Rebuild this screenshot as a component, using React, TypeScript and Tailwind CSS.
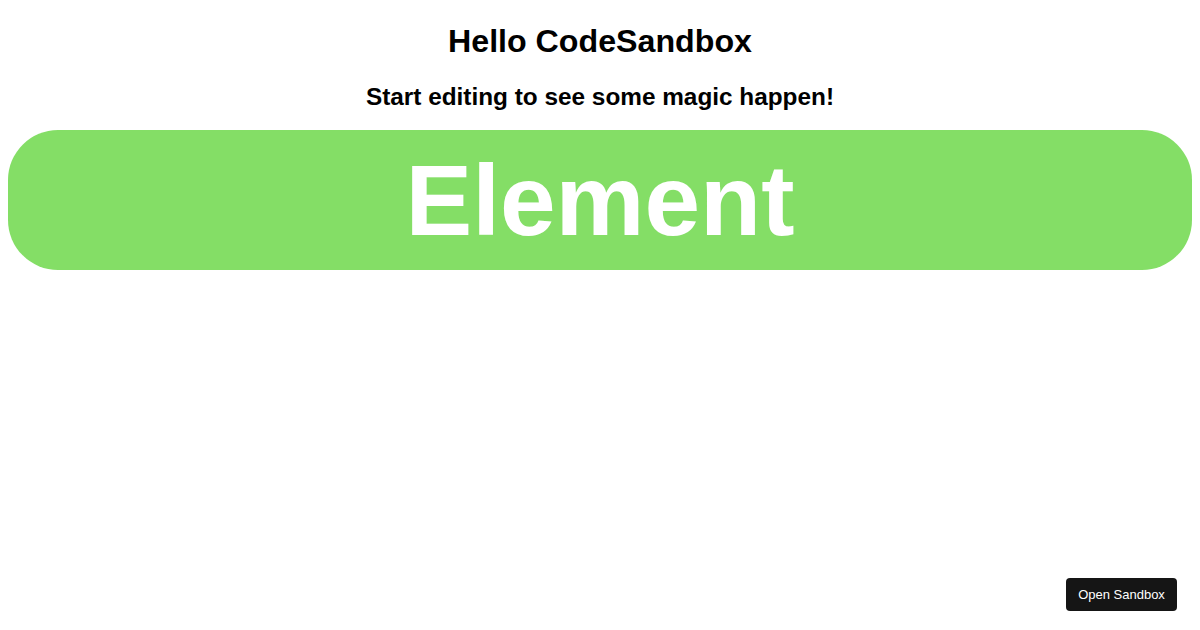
export default function App() {
  return (
    <div className="min-h-screen bg-white p-2 text-black font-['Liberation_Sans',Arial,sans-serif]">
      <div className="text-center">
        <h1 className="mt-[15px] text-[32.2px] font-bold leading-[37px]">Hello CodeSandbox</h1>
        <h2 className="mt-[23px] mb-[19.5px] text-[24.35px] font-bold leading-[27.6px]">
          Start editing to see some magic happen!
        </h2>
      </div>

      <div className="flex h-[140px] items-center justify-center rounded-[50px] bg-[#84de66]">
        <span className="text-[100px] font-bold leading-[115px] text-white">Element</span>
      </div>

      {/* floating sandbox link */}
      <a
        href="#"
        className="fixed right-[23px] bottom-[19px] flex h-[33px] w-[111px] items-center justify-center rounded-[4px] bg-[#151515] text-[13px] text-white"
      >
        Open Sandbox
      </a>
    </div>
  );
}
